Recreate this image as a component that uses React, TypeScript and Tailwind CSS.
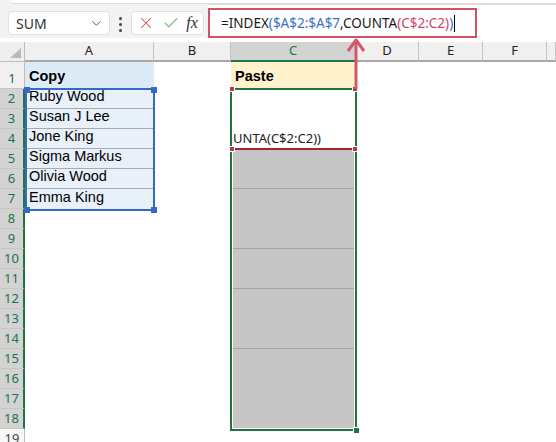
import React from 'react';
import { ChevronDown, X, Check } from 'lucide-react';

const UI = { fontFamily: '"Noto Sans", "Open Sans", sans-serif' };
const CELL = { fontFamily: '"Liberation Sans", Arial, sans-serif' };

const HEADERS = ['A', 'B', 'C', 'D', 'E', 'F', ''];
const ROWS = Array.from({ length: 19 }, (_, i) => i + 1);
const NAMES: Record<number, string> = {
  2: 'Ruby Wood',
  3: 'Susan J Lee',
  4: 'Jone King',
  5: 'Sigma Markus',
  6: 'Olivia Wood',
  7: 'Emma King',
};

function Corner({ className }: { className: string }) {
  return <div className={`absolute w-[6px] h-[6px] ${className}`} />;
}

function RowHead({ r }: { r: number }) {
  const selected = r >= 2 && r <= 18;
  return (
    <div
      style={UI}
      className={`flex items-end justify-center pb-[1px] text-[13px] leading-none border-b border-[#c6c6c6] ${
        selected
          ? 'bg-[#d3d3d3] text-[#217346] border-r-2 border-r-[#217346]'
          : r === 1
          ? 'bg-[#f0f0f0] text-[#2f5f4a] border-r border-r-[#bdbdbd]'
          : 'bg-[#f8f8f8] text-[#444] border-r border-r-[#bdbdbd]'
      }`}
    >
      <span className="mb-[2px]">{r}</span>
    </div>
  );
}

function CellA({ r }: { r: number }) {
  if (r === 1)
    return (
      <div style={CELL} className="bg-[#ddebf7] flex items-end pl-[4px] pb-[1px] text-[14.5px] font-bold text-black">
        Copy
      </div>
    );
  if (r >= 2 && r <= 7)
    return (
      <div
        style={CELL}
        className={`bg-[#e8f0fa] flex items-end pl-[4px] text-[14.5px] text-black ${
          r < 7 ? 'border-b border-[#a9a9a9]' : ''
        }`}
      >
        {NAMES[r]}
      </div>
    );
  return <div className="bg-white" />;
}

function CellC({ r }: { r: number }) {
  if (r === 1)
    return (
      <div style={CELL} className="bg-[#fff2cc] flex items-end pl-[4px] pb-[1px] text-[14.5px] font-bold text-black">
        Paste
      </div>
    );
  if (r === 4)
    return (
      <div style={UI} className="bg-white flex items-end pl-[2px] pb-[1px] text-[13px] text-[#222] whitespace-nowrap">
        UNTA(C$2:C2))
      </div>
    );
  if (r >= 5 && r <= 18)
    return (
      <div
        className={`bg-[#c6c6c6] ${
          r === 6 || r === 9 || r === 11 || r === 14 ? 'border-b border-[#a6a6a6]' : ''
        }`}
      />
    );
  return <div className="bg-white" />;
}

export default function App() {
  return (
    <div className="relative w-[556px] h-[442px] overflow-hidden bg-[#f3f3f3]">
      {/* ribbon edge */}
      <div className="h-[4px] bg-white border-b border-[#dcdcdc] rounded-bl-[6px] ml-[10px]" />

      {/* formula bar */}
      <div className="flex items-start h-[34px]">
        <div
          style={UI}
          className="ml-[8px] mt-[7px] w-[102px] h-[24px] bg-white border border-[#e0e0e0] rounded-[4px] flex items-center justify-between pl-[7px] pr-[5px] text-[14px] text-[#333]"
        >
          <span>SUM</span>
          <ChevronDown size={15} strokeWidth={1.5} className="text-[#555]" />
        </div>
        <div className="w-[21px] mt-[13px] flex flex-col items-center gap-[3px]">
          <span className="w-[3px] h-[3px] rounded-full bg-[#444]" />
          <span className="w-[3px] h-[3px] rounded-full bg-[#444]" />
          <span className="w-[3px] h-[3px] rounded-full bg-[#444]" />
        </div>
        <div className="w-[73px] mt-[7px] h-[24px] bg-white border border-[#e0e0e0] rounded-[4px] flex items-center justify-around px-[2px]">
          <X size={18} strokeWidth={1.4} className="text-[#e5484f]" />
          <Check size={18} strokeWidth={1.4} className="text-[#4ca35c]" />
          <span className="text-[16px] italic text-[#333]" style={{ fontFamily: '"Liberation Serif", "DejaVu Serif", serif' }}>
            fx
          </span>
        </div>
        <div className="flex-1 ml-[4px] h-[34px] pt-[3px] bg-white border-t border-[#dcdcdc]">
          <div
            style={UI}
            className="w-[269px] h-[30px] border-[2.5px] border-[#cf5266] flex items-center pl-[11px] text-[13.5px] text-[#1b1b1b] whitespace-nowrap"
          >
            <span>=INDEX</span>
            <span className="text-[#3b6fc9]">($A$2:$A$7</span>
            <span>,COUNTA</span>
            <span className="text-[#d0456a]">(C$2:C2)</span>
            <span className="text-[#3b6fc9]">)</span>
            <span className="w-[1px] h-[17px] bg-black ml-[1px]" />
          </div>
        </div>
      </div>

      <div className="h-[4px] bg-white" />

      {/* grid */}
      <div className="grid grid-cols-[25px_129px_77px_125px_63px_64px_64px_1fr] grid-rows-[20px_27px_repeat(18,20px)] bg-white">
        <div className="relative bg-[#efefef] border-r border-b border-[#bdbdbd]">
          <svg className="absolute right-[3px] bottom-[3px]" width="11" height="10" viewBox="0 0 11 10">
            <polygon points="11,0 11,10 0,10" fill="#b9b9b9" />
          </svg>
        </div>
        {HEADERS.map((h, i) => (
          <div
            key={i}
            style={UI}
            className={`flex items-center justify-center text-[13px] border-r border-[#c4c4c4] ${
              h === 'C'
                ? 'bg-[#d3d3d3] text-[#217346] border-b-2 border-b-[#217346]'
                : 'bg-[#f0f0f0] text-[#222] border-b-2 border-b-[#a8a8a8]'
            }`}
          >
            {h}
          </div>
        ))}
        {ROWS.map((r) => (
          <React.Fragment key={r}>
            <RowHead r={r} />
            <CellA r={r} />
            <div className="bg-white" />
            <CellC r={r} />
            <div className="bg-white" />
            <div className="bg-white" />
            <div className="bg-white" />
            <div className="bg-white" />
          </React.Fragment>
        ))}
      </div>

      {/* copy range A2:A7 */}
      <div className="absolute left-[25px] top-[88px] w-[130px] h-[123px] border-2 border-[#3569c4]">
        <Corner className="-left-[3px] -top-[3px] bg-[#3569c4]" />
        <Corner className="-right-[4px] -top-[3px] bg-[#3569c4]" />
        <Corner className="-left-[3px] -bottom-[4px] bg-[#3569c4]" />
        <Corner className="-right-[4px] -bottom-[4px] bg-[#3569c4]" />
      </div>

      {/* selection C2:C18 */}
      <div className="absolute left-[230px] top-[88px] w-[127px] h-[343px] border-2 border-[#217346]">
        <div className="w-full h-full border border-white" />
        <div className="absolute -right-[5px] -bottom-[5px] w-[7px] h-[7px] bg-[#217346] border border-white" />
      </div>

      {/* reference C2:C4 */}
      <div className="absolute left-[231px] top-[148px] w-[125px] h-[2px] bg-[#a4262c]" />
      <Corner className="left-[229px] top-[86px] bg-[#b8384c] border border-white" />
      <Corner className="left-[352px] top-[86px] bg-[#b8384c] border border-white" />
      <Corner className="left-[229px] top-[146px] bg-[#b8384c] border border-white" />
      <Corner className="left-[352px] top-[146px] bg-[#b8384c] border border-white" />

      {/* arrow */}
      <svg className="absolute left-[345px] top-[37px]" width="22" height="54" viewBox="0 0 22 54">
        <line x1="11" y1="3" x2="11" y2="52" stroke="#d4586b" strokeWidth="3" />
        <polyline points="3,14 11,3 19,14" fill="none" stroke="#d4586b" strokeWidth="3" strokeLinejoin="round" />
      </svg>
    </div>
  );
}
